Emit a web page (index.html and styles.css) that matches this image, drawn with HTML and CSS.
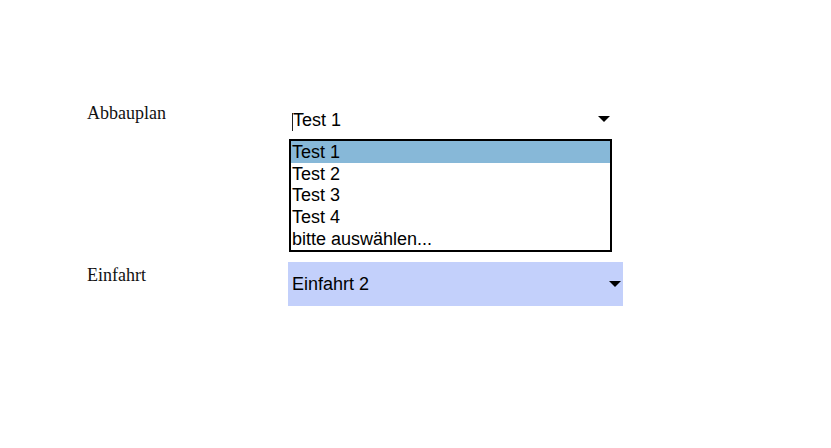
FILE: index.html
```html
<!DOCTYPE html>
<html lang="de">
<head>
<meta charset="utf-8">
<title>Formular</title>
<link rel="stylesheet" href="styles.css">
</head>
<body>
<main class="form">
  <div class="row">
    <div class="label">Abbauplan</div>
    <div class="field">
      <div class="select select-plain">
        <span class="value"><span class="caret"></span>Test 1</span>
        <span class="arrow"></span>
      </div>
      <ul class="listbox">
        <li class="option selected">Test 1</li>
        <li class="option">Test 2</li>
        <li class="option">Test 3</li>
        <li class="option">Test 4</li>
        <li class="option">bitte auswählen...</li>
      </ul>
    </div>
  </div>
  <div class="row row-second">
    <div class="label">Einfahrt</div>
    <div class="field">
      <div class="select select-filled">
        <span class="value">Einfahrt 2</span>
        <span class="arrow"></span>
      </div>
    </div>
  </div>
</main>
</body>
</html>
```

FILE: styles.css
```css
html, body {
  margin: 0;
  padding: 0;
  background: #ffffff;
}

.form {
  padding: 99px 0 0 87px;
  display: flex;
  flex-direction: column;
}

.row {
  display: grid;
  grid-template-columns: 201px auto;
  align-items: start;
}

.row-second {
  margin-top: 10px;
}

.label {
  font-family: "Liberation Serif", "Times New Roman", serif;
  font-size: 18px;
  line-height: 21px;
  color: #111111;
  padding-top: 4px;
}

.row-second .label {
  padding-top: 3px;
}

.field {
  display: flex;
  flex-direction: column;
}

.select {
  display: flex;
  align-items: center;
  justify-content: space-between;
  box-sizing: border-box;
  padding: 0 2px 0 4px;
  font-family: "Liberation Sans", Arial, sans-serif;
  font-size: 18px;
  color: #000000;
}

.select-plain {
  width: 324px;
  height: 40px;
  padding-top: 2px;
  background: #ffffff;
}

.select-filled {
  width: 335px;
  height: 44px;
  padding-top: 1px;
  background: #c3d0fb;
}

.value {
  display: flex;
  align-items: center;
  line-height: 21px;
}

.caret {
  display: inline-block;
  width: 0;
  height: 18px;
  border-left: 1px solid #222222;
  margin-top: 4px;
}

.arrow {
  width: 0;
  height: 0;
  border-left: 6.5px solid transparent;
  border-right: 6.5px solid transparent;
  border-top: 6px solid #000000;
}

.select-plain .arrow {
  margin-top: -2px;
}

.listbox {
  list-style: none;
  margin: 0 0 0 1px;
  padding: 0;
  width: 323px;
  box-sizing: border-box;
  border: 2px solid #000000;
  background: #ffffff;
  font-family: "Liberation Sans", Arial, sans-serif;
  font-size: 18px;
  color: #000000;
}

.option {
  box-sizing: border-box;
  height: 21.8px;
  line-height: 21px;
  padding: 0.8px 0 0 1px;
  white-space: nowrap;
}

.option.selected {
  background: #87b8d8;
}
```
